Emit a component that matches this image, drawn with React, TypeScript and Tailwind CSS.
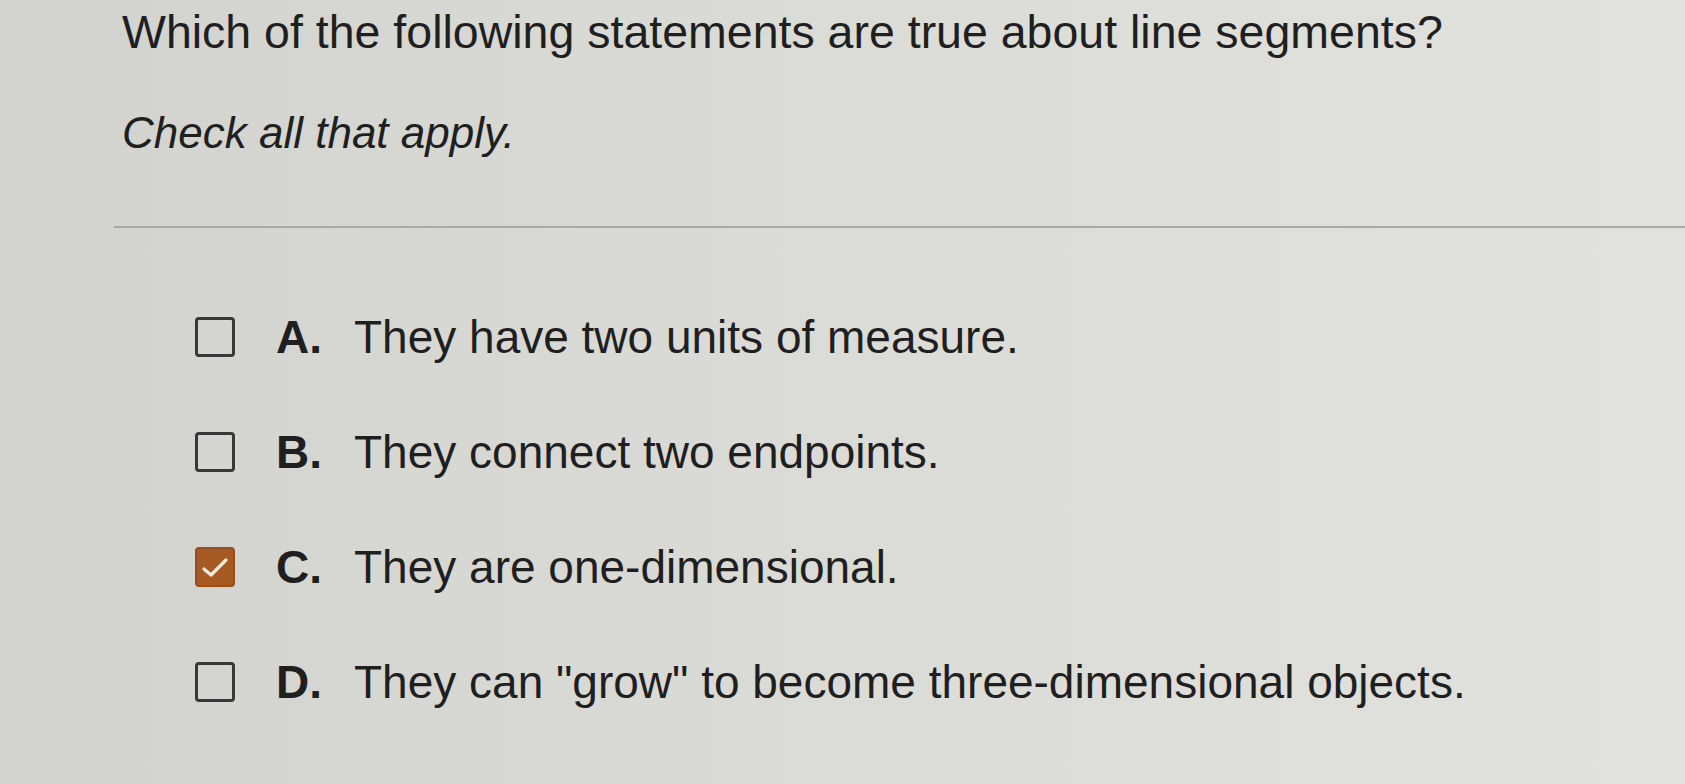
import React from "react";

const OPTIONS = [
  { label: "A.", text: "They have two units of measure.", checked: false },
  { label: "B.", text: "They connect two endpoints.", checked: false },
  { label: "C.", text: "They are one-dimensional.", checked: true },
  { label: "D.", text: 'They can "grow" to become three-dimensional objects.', checked: false },
];

function Box({ checked }: { checked: boolean }) {
  if (checked) {
    return (
      <div className="w-[40px] h-[40px] rounded-[4px] bg-[#a65a22] border-2 border-[#97501c] flex items-center justify-center shrink-0">
        <svg width="32" height="26" viewBox="0 0 32 26" fill="none">
          <path d="M5 15 L12 21 L27 6" stroke="#f5e9dc" strokeWidth="3.2" strokeLinecap="round" strokeLinejoin="round" />
        </svg>
      </div>
    );
  }
  return <div className="w-[40px] h-[40px] rounded-[4px] border-[3px] border-[#383838] shrink-0" />;
}

export default function App() {
  return (
    <div className="w-[1685px] h-[784px] overflow-hidden bg-gradient-to-r from-[#d2d2ce] via-[#dbdbd7] to-[#e1e1de] text-[#1f1f1f] font-['Liberation_Sans',Arial,sans-serif]">
      <div className="pl-[122px] pt-[4px]">
        <h1 className="text-[46.5px] leading-[56px] font-normal">
          Which of the following statements are true about line segments?
        </h1>
        <p className="mt-[46px] text-[44px] leading-[54px] italic">Check all that apply.</p>
      </div>

      {/* divider */}
      <div className="mt-[66px] ml-[114px] h-[2px] bg-[#a9a9a5]" />

      <div className="mt-[83px] pl-[195px] flex flex-col gap-[63px]">
        {OPTIONS.map((o) => (
          <div key={o.label} className="flex items-center h-[52px]">
            <Box checked={o.checked} />
            <span className="ml-[41px] w-[78px] text-[46px] font-bold">{o.label}</span>
            <span className="text-[46px]">{o.text}</span>
          </div>
        ))}
      </div>
    </div>
  );
}
